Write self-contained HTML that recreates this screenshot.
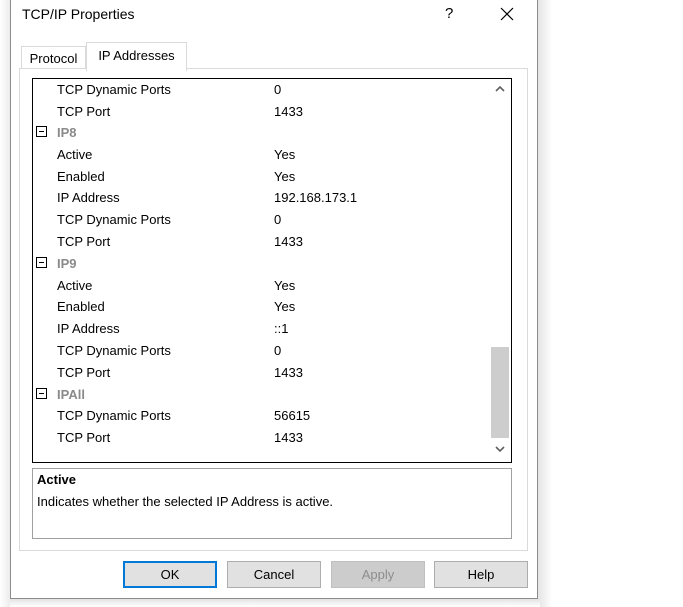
<!DOCTYPE html>
<html><head><style>
body{margin:0;width:683px;height:607px;background:#fff;position:relative;overflow:hidden;font-family:"Liberation Sans",sans-serif;font-size:13px;color:#000}
.a{position:absolute}
.row{position:absolute;left:57px;height:20px;line-height:20px}
.v{position:absolute;left:274px;height:20px;line-height:20px}
.h{color:#8a8a8a;font-weight:bold}
.mb{position:absolute;left:36px;width:9px;height:9px;border:1px solid #000;background:#fff}
.mb:after{content:"";position:absolute;left:2px;top:4px;width:5px;height:1px;background:#000}
.btn{position:absolute;top:561px;width:92px;height:25px;border:1px solid #adadad;background:#e1e1e1;text-align:center;line-height:25px;font-size:13px}
</style></head><body>
<div class="a" style="left:0;top:0;width:10px;height:607px;background:linear-gradient(to right,#fff,#ececec)"></div>
<div class="a" style="left:538px;top:0;width:14px;height:607px;background:linear-gradient(to right,#e4e4e4,#fff)"></div>
<div class="a" style="left:10px;top:598px;width:530px;height:9px;background:linear-gradient(#e0e0e0,#fff)"></div>
<div class="a" style="left:10px;top:-1px;width:526px;height:598px;border:1px solid #8c8c8c;background:#fff"></div>
<div class="a" style="left:22px;top:6px;font-size:14px">TCP/IP Properties</div>
<div class="a" style="left:445px;top:5px;font-size:15px">?</div>
<svg class="a" style="left:500px;top:7px" width="14" height="14"><path d="M1 1L13 13M13 1L1 13" stroke="#000" stroke-width="1.2"/></svg>
<div class="a" style="left:19px;top:68px;width:507px;height:481px;border:1px solid #dadada"></div>
<div class="a" style="left:21px;top:46px;width:63px;height:22px;border:1px solid #dadada;border-bottom:none;line-height:23px;text-align:center">Protocol</div>
<div class="a" style="left:86px;top:42px;width:99px;height:28px;border:1px solid #dadada;border-bottom:none;background:#fff;line-height:25px;text-align:center">IP Addresses</div>
<div class="a" style="left:32px;top:78px;width:478px;height:383px;border:1px solid #000"></div>
<div class="a" style="left:491px;top:347px;width:18px;height:91px;background:#cdcdcd"></div>
<svg class="a" style="left:495px;top:86px" width="10" height="7"><path d="M1 5L5 1L9 5" stroke="#606060" stroke-width="1.6" fill="none"/></svg>
<svg class="a" style="left:495px;top:446px" width="10" height="7"><path d="M1 1L5 5L9 1" stroke="#606060" stroke-width="1.6" fill="none"/></svg>

<div class="row" style="top:80px">TCP Dynamic Ports</div><div class="v" style="top:80px">0</div>
<div class="row" style="top:102px">TCP Port</div><div class="v" style="top:102px">1433</div>
<div class="mb" style="top:126px"></div><div class="row h" style="top:123px">IP8</div>
<div class="row" style="top:145px">Active</div><div class="v" style="top:145px">Yes</div>
<div class="row" style="top:167px">Enabled</div><div class="v" style="top:167px">Yes</div>
<div class="row" style="top:188px">IP Address</div><div class="v" style="top:188px">192.168.173.1</div>
<div class="row" style="top:210px">TCP Dynamic Ports</div><div class="v" style="top:210px">0</div>
<div class="row" style="top:232px">TCP Port</div><div class="v" style="top:232px">1433</div>
<div class="mb" style="top:257px"></div><div class="row h" style="top:254px">IP9</div>
<div class="row" style="top:276px">Active</div><div class="v" style="top:276px">Yes</div>
<div class="row" style="top:297px">Enabled</div><div class="v" style="top:297px">Yes</div>
<div class="row" style="top:319px">IP Address</div><div class="v" style="top:319px">::1</div>
<div class="row" style="top:341px">TCP Dynamic Ports</div><div class="v" style="top:341px">0</div>
<div class="row" style="top:363px">TCP Port</div><div class="v" style="top:363px">1433</div>
<div class="mb" style="top:388px"></div><div class="row h" style="top:385px">IPAll</div>
<div class="row" style="top:406px">TCP Dynamic Ports</div><div class="v" style="top:406px">56615</div>
<div class="row" style="top:428px">TCP Port</div><div class="v" style="top:428px">1433</div>

<div class="a" style="left:32px;top:468px;width:478px;height:69px;border:1px solid #a0a0a0"></div>
<div class="a" style="left:37px;top:472px;font-weight:bold">Active</div>
<div class="a" style="left:37px;top:494px">Indicates whether the selected IP Address is active.</div>

<div class="btn" style="left:123px;border:2px solid #0078d7;height:23px;width:90px;line-height:23px">OK</div>
<div class="btn" style="left:227px">Cancel</div>
<div class="btn" style="left:331px;background:#ccc;border-color:#bfbfbf;color:#8d8d8d">Apply</div>
<div class="btn" style="left:434px">Help</div>
</body></html>
